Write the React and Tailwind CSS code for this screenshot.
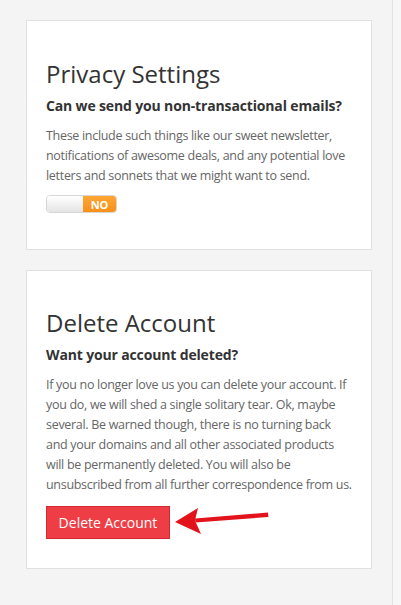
const Toggle = () => (
  <div className="flex h-[18px] w-[71px] overflow-hidden rounded-[4px] border border-[#d6d6d6]">
    <div className="w-[36px] bg-gradient-to-b from-[#ffffff] to-[#e4e4e4]" />
    <div className="flex flex-1 items-center justify-center bg-gradient-to-b from-[#ffa634] to-[#f7901a] text-[11px] font-bold leading-none text-white">
      NO
    </div>
  </div>
);

const Arrow = () => (
  <svg
    className="absolute left-[129px] top-0"
    width="96"
    height="30"
    viewBox="0 0 96 30"
  >
    <path d="M20 12.5 L93 6.5 L93.4 11 L20.5 16.5 Z" fill="#e3131b" />
    <path d="M0 16 L23 2 L20 14.5 L26 28 Z" fill="#e3131b" />
  </svg>
);

function App() {
  return (
    <div className="min-h-[605px] w-[401px] bg-[#f7f7f7] font-['Open_Sans',sans-serif]">
      <div className="min-h-[605px] w-[393px] border-r border-[#e3e3e3] bg-[#f4f4f4] pl-[26px] pr-[20px] pt-[20px]">
        <section className="border border-[#e0e0e0] bg-white pb-[36px] pl-[19px] pr-[19px] pt-[38px]">
          <h2 className="text-[24px] leading-[30px] text-[#333]">Privacy Settings</h2>
          <h3 className="mt-[7px] text-[14px] font-bold leading-[20px] tracking-[-0.15px] text-[#333]">
            Can we send you non-transactional emails?
          </h3>
          <p className="mt-[10px] text-[12.5px] leading-[20px] tracking-[-0.3px] text-[#666]">
            These include such things like our sweet newsletter, notifications of awesome deals, and any
            potential love letters and sonnets that we might want to send.
          </p>
          <div className="mt-[9px]">
            <Toggle />
          </div>
        </section>

        <section className="mt-[20px] border border-[#e0e0e0] bg-white pb-[29px] pl-[19px] pr-[19px] pt-[37px]">
          <h2 className="text-[24px] leading-[30px] text-[#333]">Delete Account</h2>
          <h3 className="mt-[7px] text-[14px] font-bold leading-[20px] tracking-[-0.15px] text-[#333]">
            Want your account deleted?
          </h3>
          <p className="mt-[10px] text-[12.5px] leading-[20px] tracking-[-0.3px] text-[#666]">
            If you no longer love us you can delete your account. If you do, we will shed a single solitary
            tear. Ok, maybe several. Be warned though, there is no turning back and your domains and all
            other associated products will be permanently deleted. You will also be unsubscribed from all
            further correspondence from us.
          </p>
          <div className="relative mt-[11px]">
            <button className="h-[33px] w-[124px] border border-[#cf2a31] bg-[#ee3d45] text-[14px] text-white">
              Delete Account
            </button>
            <Arrow />
          </div>
        </section>
      </div>
    </div>
  );
}

export default App;
